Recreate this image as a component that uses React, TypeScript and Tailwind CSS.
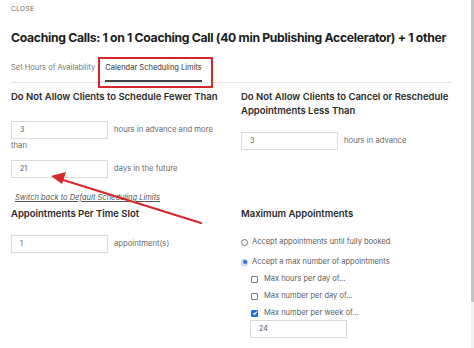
import React from "react";

const font = { fontFamily: "Inter, 'Noto Sans', sans-serif" };

function TextInput({ value, className = "" }: { value: string; className?: string }) {
  return (
    <span
      className={`inline-flex h-[18px] w-[97px] items-center border border-[#dcdcdc] bg-white pl-[8px] align-middle text-[7px] leading-[10px] text-[#555] ${className}`}
    >
      {value}
    </span>
  );
}

function Radio({ checked, label }: { checked?: boolean; label: string }) {
  return (
    <div className="flex h-[12px] items-center gap-[4px] text-[7.5px] text-[#5a5a5a]">
      {checked ? (
        <span className="flex size-[7px] items-center justify-center rounded-full border border-[#8fb3e8] bg-white">
          <span className="size-[4px] rounded-full bg-[#2f6fd6]" />
        </span>
      ) : (
        <span className="size-[7px] rounded-full border border-[#777] bg-white" />
      )}
      <span>{label}</span>
    </div>
  );
}

function Check({ checked, label }: { checked?: boolean; label: string }) {
  return (
    <div className="flex h-[12px] items-center gap-[6px] pl-[10px] text-[7.5px] text-[#5a5a5a]">
      {checked ? (
        <span className="flex size-[7px] items-center justify-center rounded-[1px] bg-[#1f6fe0]">
          <svg viewBox="0 0 10 10" className="size-[6px]">
            <path d="M2 5.2 4.2 7.4 8.2 2.6" fill="none" stroke="#fff" strokeWidth="1.8" />
          </svg>
        </span>
      ) : (
        <span className="size-[7px] rounded-[1px] border border-[#777] bg-white" />
      )}
      <span>{label}</span>
    </div>
  );
}

export default function App() {
  return (
    <div className="relative flex h-[348px] w-[474px] overflow-hidden bg-white text-[#1b1b1b]" style={font}>
      <div className="flex-1 px-[11px]">
        <div className="pt-[5px] text-[6.5px] leading-[8px] tracking-[0.06em] text-[#666]">CLOSE</div>
        <h1 className="mt-[17px] whitespace-nowrap text-[12.2px] font-bold leading-[16px] tracking-[-0.025em]">
          Coaching Calls: 1 on 1 Coaching Call (40 min Publishing Accelerator) + 1 other
        </h1>

        {/* tabs */}
        <div className="mt-[14px] flex w-[441px] border-b border-[#e6e6e6] text-[7.5px] leading-[10px]">
          <div className="pb-[9px] pt-[3px] text-[#777]">Set Hours of Availability</div>
          <div className="relative ml-[10px] pt-[3px]">
            <div className="pb-[7px] text-[#333]">Calendar Scheduling Limits</div>
            <div className="h-[2px] w-full bg-[#444]" />
            <span className="pointer-events-none absolute -bottom-[6px] -left-[7px] -right-[11px] -top-[3px] border-2 border-[#d8262c]" />
          </div>
        </div>

        <div className="grid grid-cols-[212px_1fr] gap-x-[18px]">
          {/* left row 1 */}
          <div className="pt-[7px]">
            <h2 className="whitespace-nowrap text-[9.5px] font-semibold leading-[14px] text-[#2a2a2a]">
              Do Not Allow Clients to Schedule Fewer Than
            </h2>
            <p className="mt-[17px] text-[7.7px] leading-[14px] text-[#6a6a6a]">
              <TextInput value="3" className="mr-[6px]" />
              hours in advance and more than
            </p>
            <p className="mt-[7px] text-[7.7px] leading-[14px] text-[#6a6a6a]">
              <TextInput value="21" className="mr-[6px]" />
              days in the future
            </p>
            <a className="mt-[14px] block pl-[4px] text-[7.5px] italic leading-[12px] text-[#555] underline">
              Switch back to Default Scheduling Limits
            </a>
          </div>

          {/* right row 1 */}
          <div className="pt-[7px]">
            <h2 className="text-[9.5px] font-semibold leading-[14px] text-[#2a2a2a]">
              Do Not Allow Clients to Cancel or Reschedule Appointments Less Than
            </h2>
            <p className="mt-[14px] text-[7.7px] leading-[14px] text-[#6a6a6a]">
              <TextInput value="3" className="mr-[6px]" />
              hours in advance
            </p>
          </div>

          {/* left row 2 */}
          <div className="pt-[3px]">
            <h2 className="text-[9.5px] font-semibold leading-[14px] text-[#2a2a2a]">Appointments Per Time Slot</h2>
            <p className="mt-[14px] text-[7.7px] leading-[14px] text-[#6a6a6a]">
              <TextInput value="1" className="mr-[6px]" />
              appointment(s)
            </p>
          </div>

          {/* right row 2 */}
          <div className="pt-[3px]">
            <h2 className="text-[9.5px] font-semibold leading-[14px] text-[#2a2a2a]">Maximum Appointments</h2>
            <div className="mt-[15px] flex flex-col gap-[8px]">
              <Radio label="Accept appointments until fully booked" />
              <Radio checked label="Accept a max number of appointments" />
            </div>
            <div className="mt-[5px] flex flex-col gap-[5px]">
              <Check label="Max hours per day of..." />
              <Check label="Max number per day of..." />
              <Check checked label="Max number per week of..." />
            </div>
            <div className="mt-[1px] flex pl-[9px]">
              <TextInput value="24" />
            </div>
          </div>
        </div>
      </div>

      {/* scrollbar */}
      <div className="flex w-[3px] flex-col bg-[#f1f1f1]">
        <div className="h-[302px] bg-[#c4c4c4]" />
      </div>

      {/* annotation arrow */}
      <svg className="pointer-events-none absolute left-0 top-0" width="474" height="348" viewBox="0 0 474 348">
        <line x1="201" y1="223" x2="60" y2="179" stroke="#d8262c" strokeWidth="2.2" strokeLinecap="round" />
        <polygon points="51,176 66,172 62,184" fill="#d8262c" />
      </svg>
    </div>
  );
}
